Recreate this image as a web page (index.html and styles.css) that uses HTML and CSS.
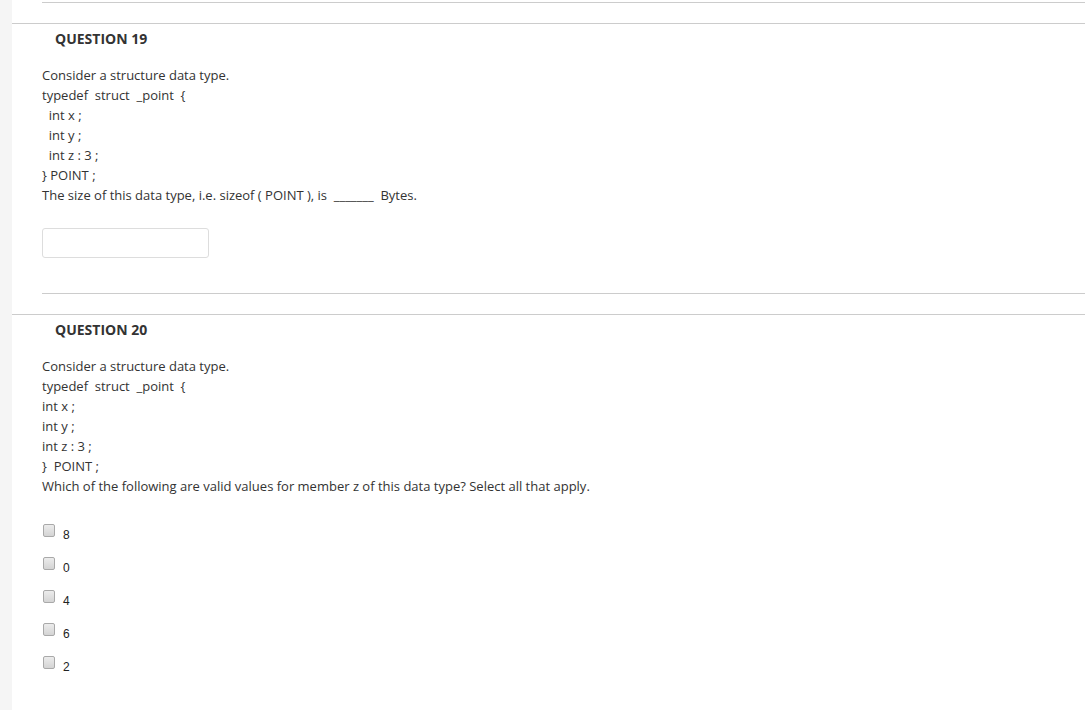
FILE: index.html
```html
<!DOCTYPE html>
<html>
<head>
<meta charset="utf-8">
<link rel="stylesheet" href="styles.css">
</head>
<body>
<div class="page">
  <div class="gutter"></div>
  <div class="main">
    <div class="qend"></div>
    <section class="q">
      <h2 class="q-title">QUESTION 19</h2>
      <div class="q-body">
        <div>Consider a structure data type.</div>
        <div>typedef&nbsp; struct&nbsp; _point&nbsp; {</div>
        <div>&nbsp; int x ;</div>
        <div>&nbsp; int y ;</div>
        <div>&nbsp; int z : 3 ;</div>
        <div>} POINT ;</div>
        <div>The size of this data type, i.e. sizeof ( POINT ), is&nbsp; _______&nbsp; Bytes.</div>
      </div>
      <div class="q-answer">
        <input class="text-answer" type="text">
      </div>
    </section>
    <div class="qend"></div>
    <section class="q">
      <h2 class="q-title">QUESTION 20</h2>
      <div class="q-body">
        <div>Consider a structure data type.</div>
        <div>typedef&nbsp; struct&nbsp; _point&nbsp; {</div>
        <div>int x ;</div>
        <div>int y ;</div>
        <div>int z : 3 ;</div>
        <div>}&nbsp; POINT ;</div>
        <div>Which of the following are valid values for member z of this data type? Select all that apply.</div>
      </div>
      <ul class="choices">
        <li class="choice"><input type="checkbox" class="cb"><span class="choice-label">8</span></li>
        <li class="choice"><input type="checkbox" class="cb"><span class="choice-label">0</span></li>
        <li class="choice"><input type="checkbox" class="cb"><span class="choice-label">4</span></li>
        <li class="choice"><input type="checkbox" class="cb"><span class="choice-label">6</span></li>
        <li class="choice"><input type="checkbox" class="cb"><span class="choice-label">2</span></li>
      </ul>
    </section>
  </div>
</div>
</body>
</html>
```

FILE: styles.css
```css
html, body {
  margin: 0;
  padding: 0;
  background: #ffffff;
}
body {
  font-family: "Open Sans", "Liberation Sans", Arial, sans-serif;
  font-size: 13px;
  color: #333333;
}
.page {
  display: flex;
  min-height: 710px;
}
.gutter {
  width: 12px;
  flex: none;
  background: #f5f5f5;
}
.main {
  flex: 1;
  padding-top: 2px;
}
.qend {
  margin-left: 30px;
  border-top: 1px solid #cccccc;
  height: 20px;
}
.q {
  border-top: 1px solid #cccccc;
}
.q-title {
  margin: 5px 0 0 43px;
  font-size: 14px;
  font-weight: 700;
  line-height: 20px;
  color: #333333;
}
.q-body {
  margin: 16px 0 0 30px;
  line-height: 20px;
  white-space: nowrap;
}
.q-answer {
  margin: 23px 0 35px 30px;
}
.text-answer {
  display: block;
  box-sizing: border-box;
  width: 167px;
  height: 30px;
  margin: 0;
  border: 1px solid #dddddd;
  border-radius: 3px;
  background: #ffffff;
  outline: none;
}
.choices {
  list-style: none;
  margin: 28px 0 0 30px;
  padding: 0;
}
.choice {
  display: flex;
  align-items: flex-start;
  height: 33px;
}
.cb {
  appearance: none;
  -webkit-appearance: none;
  box-sizing: border-box;
  width: 12px;
  height: 13px;
  margin: 0 0 0 1px;
  border: 1px solid #a9a9a9;
  border-radius: 2px;
  background: linear-gradient(#ececec, #d4d4d4);
}
.choice-label {
  margin-left: 8px;
  margin-top: 4px;
  font-family: "Liberation Sans", Arial, sans-serif;
  font-size: 12px;
  line-height: 14px;
  color: #222222;
}
```
